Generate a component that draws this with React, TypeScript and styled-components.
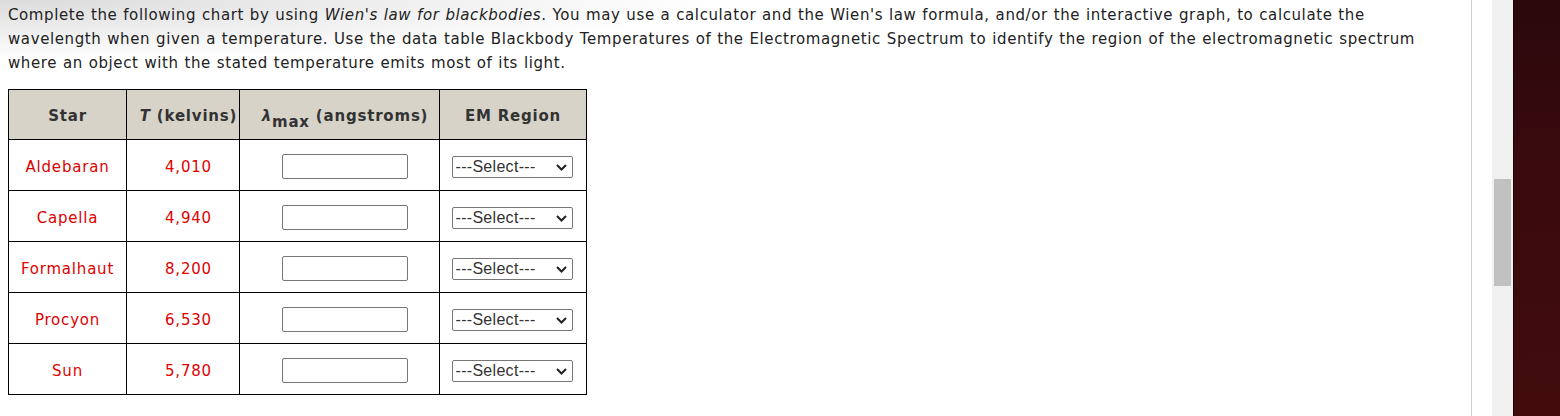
import React from "react";
import styled, { createGlobalStyle } from "styled-components";

const Global = createGlobalStyle`
  html, body { margin: 0; padding: 0; background: #fff; }
  body { width: 1560px; height: 416px; overflow: hidden; }
`;

const Page = styled.div`
  display: flex;
  width: 1560px;
  height: 416px;
`;

const Main = styled.div`
  width: 1472px;
  height: 416px;
  box-sizing: border-box;
  border-right: 1px solid #cfcfcf;
  padding: 3px 0 0 8px;
  background: radial-gradient(ellipse 720px 60px at 0 0, rgba(0,0,0,0.14), rgba(0,0,0,0) 100%), #fff;
  font-family: Verdana, "DejaVu Sans", sans-serif;
  color: #222;
`;

const Intro = styled.p`
  margin: 0;
  font-size: 15px;
  line-height: 24px;
  white-space: nowrap;
  letter-spacing: 0.6px;
  word-spacing: 0.5px;
`;

const Table = styled.table`
  margin-top: 14px;
  border-collapse: collapse;
  table-layout: fixed;
  width: 578px;
  font-family: Verdana, "DejaVu Sans", sans-serif;
  font-size: 15px;
`;

const Th = styled.th<{ $w: number; $pl?: number }>`
  width: ${(p) => p.$w - (p.$pl ?? 0)}px;
  height: 46px;
  padding: 3px 0 0 ${(p) => p.$pl ?? 0}px;
  border: 1px solid #000;
  background: #d7d3c9;
  color: #333;
  font-weight: bold;
  text-align: center;
  vertical-align: middle;
  letter-spacing: 0.8px;
  white-space: nowrap;
  overflow: visible;
`;

const Td = styled.td<{ $red?: boolean; $pl?: number }>`
  height: 47px;
  padding: 3px 0 0 ${(p) => p.$pl ?? 0}px;
  border: 1px solid #000;
  text-align: center;
  vertical-align: middle;
  color: ${(p) => (p.$red ? "#e00000" : "#222")};
  letter-spacing: 0.8px;
`;

const Sub = styled.sub`
  font-size: 15px;
  vertical-align: -6px;
  line-height: 0;
`;

const TextInput = styled.input`
  width: 126px;
  height: 25px;
  box-sizing: border-box;
  border: 1px solid #767676;
  border-radius: 2px;
  padding: 0 4px;
  margin: 0;
  vertical-align: middle;
`;

const SelectWrap = styled.span`
  position: relative;
  display: inline-block;
  vertical-align: middle;
  margin-left: -2px;
`;

const Select = styled.select`
  appearance: none;
  -webkit-appearance: none;
  width: 121px;
  height: 22px;
  box-sizing: border-box;
  border: 1px solid #767676;
  border-radius: 2px;
  background: #fff;
  padding: 0 0 0 3px;
  font-family: "Liberation Sans", Arial, sans-serif;
  font-size: 16px;
  letter-spacing: 0.3px;
  color: #333;
  display: block;
`;

const Chevron = styled.svg`
  position: absolute;
  right: 6px;
  top: 8px;
  pointer-events: none;
`;

const Gutter = styled.div`
  width: 20px;
  height: 416px;
  background: #fff;
`;

const ScrollTrack = styled.div`
  width: 21px;
  height: 416px;
  background: #f0f0f0;
  padding: 179px 2px 0 2px;
  box-sizing: border-box;
`;

const Thumb = styled.div`
  width: 17px;
  height: 107px;
  background: #c1c1c1;
`;

const Dark = styled.div`
  flex: 1;
  height: 416px;
  border-left: 1px solid #1e0506;
  background: linear-gradient(180deg, #2a080c 0%, #3a0a0e 40%, #420c0c 100%);
`;

const rows = [
  { star: "Aldebaran", t: "4,010" },
  { star: "Capella", t: "4,940" },
  { star: "Formalhaut", t: "8,200" },
  { star: "Procyon", t: "6,530" },
  { star: "Sun", t: "5,780" },
];

function RegionSelect() {
  return (
    <SelectWrap>
      <Select defaultValue="">
        <option value="">---Select---</option>
        <option>Gamma rays</option>
        <option>X-rays</option>
        <option>Ultraviolet</option>
        <option>Visible</option>
        <option>Infrared</option>
        <option>Microwave</option>
        <option>Radio</option>
      </Select>
      <Chevron width="11" height="7" viewBox="0 0 11 7">
        <path d="M1 1 L5.5 5.5 L10 1" fill="none" stroke="#222" strokeWidth="2" />
      </Chevron>
    </SelectWrap>
  );
}

export default function App() {
  return (
    <>
      <Global />
      <Page>
        <Main>
          <Intro>
            Complete the following chart by using <i>Wien's law for blackbodies</i>. You may use a
            calculator and the Wien's law formula, and/or the interactive graph, to calculate the
            <br />
            wavelength when given a temperature. Use the data table Blackbody Temperatures of the
            Electromagnetic Spectrum to identify the region of the electromagnetic spectrum
            <br />
            where an object with the stated temperature emits most of its light.
          </Intro>
          <Table>
            <thead>
              <tr>
                <Th $w={117}>Star</Th>
                <Th $w={112} $pl={11}>
                  <i>T</i> (kelvins)
                </Th>
                <Th $w={199} $pl={11}>
                  <i>λ</i>
                  <Sub>max</Sub> (angstroms)
                </Th>
                <Th $w={146}>EM Region</Th>
              </tr>
            </thead>
            <tbody>
              {rows.map((r) => (
                <tr key={r.star}>
                  <Td $red>{r.star}</Td>
                  <Td $red $pl={11}>{r.t}</Td>
                  <Td $pl={10}>
                    <TextInput type="text" />
                  </Td>
                  <Td>
                    <RegionSelect />
                  </Td>
                </tr>
              ))}
            </tbody>
          </Table>
        </Main>
        <Gutter />
        <ScrollTrack>
          <Thumb />
        </ScrollTrack>
        <Dark />
      </Page>
    </>
  );
}
